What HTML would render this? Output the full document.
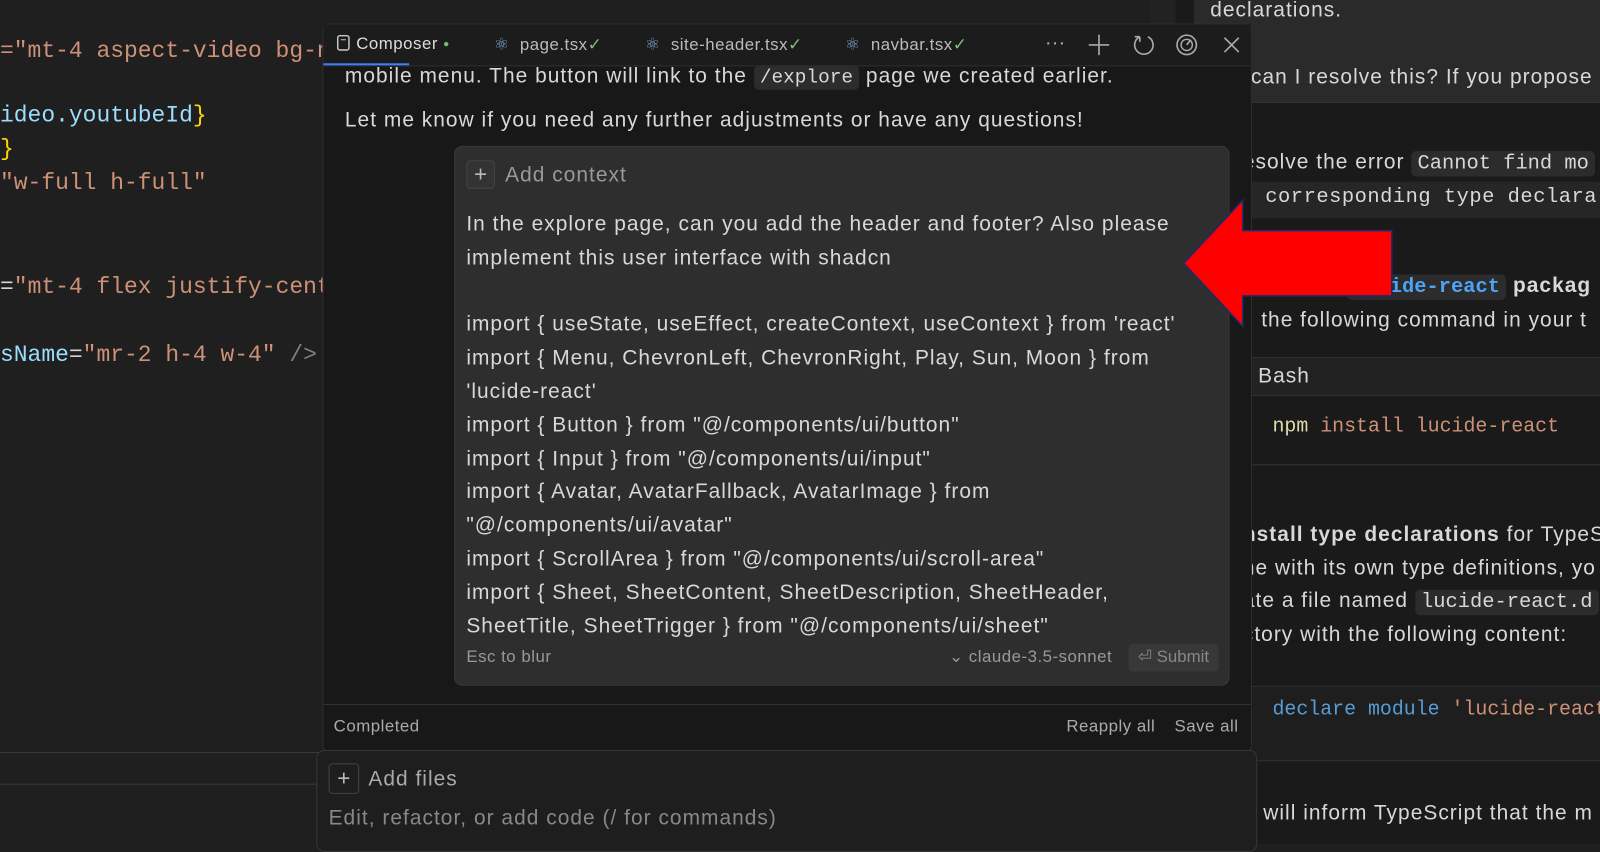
<!DOCTYPE html>
<html><head><meta charset="utf-8"><style>
*{margin:0;padding:0;box-sizing:border-box}
body{width:1600px;height:827px;overflow:hidden;background:#1f1f1f;font-family:"Liberation Sans",sans-serif;color:#ccc;position:relative}
#w{position:absolute;left:0;top:0;width:1600px;height:827px;transform:scale(1.0204);transform-origin:0 0}
.abs{position:absolute;white-space:nowrap}
.code{font-family:"Liberation Mono",monospace;font-size:22.5px;color:#ce9178;letter-spacing:0}
.b{color:#9cdcfe}.y{color:#ffd700}.g{color:#808080}
.ui{font-size:20.5px;color:#d8d8d8;letter-spacing:1px}
.sm{font-size:16.5px;letter-spacing:0.5px}
.chip{font-family:"Liberation Mono",monospace;background:#2c2c2c;border-radius:5px;padding:1px 6px;letter-spacing:0}
</style></head><body><div id="w">
<!-- left editor -->
<div class="abs code" style="left:0;top:37px">="mt-4 aspect-video bg-n</div>
<div class="abs code b" style="left:0;top:100px">ideo.youtubeId<span class="y">}</span></div>
<div class="abs code y" style="left:0;top:133px">}</div>
<div class="abs code" style="left:0;top:166px">"w-full h-full"</div>
<div class="abs code" style="left:0;top:268px"><span style="color:#d4d4d4">=</span>"mt-4 flex justify-cent</div>
<div class="abs code" style="left:0;top:335px"><span class="b">sName</span><span style="color:#d4d4d4">=</span>"mr-2 h-4 w-4" <span class="g">/&gt;</span></div>
<div class="abs" style="left:0;top:737px;width:316px;height:1px;background:#3a3a3a"></div>
<div class="abs" style="left:0;top:768px;width:316px;height:1px;background:#3a3a3a"></div>

<!-- right panel -->
<div class="abs" style="left:1128px;top:0;width:472px;height:827px;background:#1a1a1a"></div>
<div class="abs" style="left:1128px;top:0;width:24px;height:827px;background:#222"></div>
<div class="abs" style="left:1170px;top:0;width:430px;height:100px;background:#2a2a2a"></div>
<div class="abs ui" style="left:1186px;top:-2px">declarations.</div>
<div class="abs ui" style="left:1226px;top:64px">can I resolve this? If you propose</div>
<div class="abs" style="left:1170px;top:100px;width:430px;height:1px;background:#333"></div>
<div class="abs ui" style="left:1218px;top:147px">esolve the error <span class="chip" style="font-size:20px">Cannot find mo</span></div>
<div class="abs" style="left:1226px;top:178px;width:374px;height:36px;background:#262626"></div>
<div class="abs ui" style="left:1240px;top:182px;font-family:'Liberation Mono',monospace;font-size:20px;letter-spacing:0.5px">corresponding type declara</div>
<div class="abs ui" style="left:1320px;top:268px"><span class="chip" style="color:#4fa3f7;font-weight:bold;font-size:20px">lucide-react</span> <b>packag</b></div>
<div class="abs ui" style="left:1236px;top:302px">the following command in your t</div>
<div class="abs" style="left:1226px;top:350px;width:374px;height:1px;background:#333"></div>
<div class="abs" style="left:1226px;top:351px;width:374px;height:36px;background:#222"></div>
<div class="abs ui" style="left:1233px;top:357px">Bash</div>
<div class="abs" style="left:1226px;top:387px;width:374px;height:1px;background:#333"></div>
<div class="abs code" style="left:1247px;top:407px;font-size:19.5px"><span style="color:#dcdcaa">npm</span> install lucide-react</div>
<div class="abs" style="left:1226px;top:455px;width:374px;height:1px;background:#333"></div>
<div class="abs ui" style="left:1218px;top:512px"><b>nstall type declarations</b> for TypeSc</div>
<div class="abs ui" style="left:1218px;top:545px">ne with its own type definitions, yo</div>
<div class="abs ui" style="left:1218px;top:577px">ate a file named <span class="chip" style="font-size:20px">lucide-react.d</span></div>
<div class="abs ui" style="left:1218px;top:610px">ctory with the following content:</div>
<div class="abs" style="left:1226px;top:672px;width:374px;height:1px;background:#333"></div>
<div class="abs" style="left:1226px;top:673px;width:374px;height:72px;background:#1e1e1e"></div>
<div class="abs code" style="left:1247px;top:684px;font-size:19.5px"><span style="color:#569cd6">declare module</span> 'lucide-react</div>
<div class="abs" style="left:1226px;top:745px;width:374px;height:1px;background:#333"></div>
<div class="abs ui" style="left:1238px;top:785px">will inform TypeScript that the m</div>

<!-- composer -->
<div class="abs" style="left:316px;top:23px;width:911px;height:714px;background:#181818;border:1px solid #2e2e2e;border-radius:6px"></div>
<div class="abs" style="left:317px;top:24px;width:909px;height:41px;background:#1c1c1c;border-bottom:1px solid #2e2e2e"></div>
<div class="abs" style="left:317px;top:62px;width:84px;height:2px;background:#3b82f6"></div>
<div class="abs sm" style="left:330px;top:34px;color:#ddd">
<svg width="14" height="16" style="vertical-align:-2px"><rect x="1" y="1" width="11" height="14" rx="2" fill="none" stroke="#ccc" stroke-width="1.4"/><line x1="4" y1="5" x2="9" y2="5" stroke="#ccc"/></svg> Composer <span style="color:#6fbf73;font-size:10px;vertical-align:2px">●</span></div>
<div class="abs sm" style="left:484px;top:34px;color:#bbb"><span style="color:#7aa6d6">⚛</span>&nbsp; page.tsx<span style="color:#7fbf7f">✓</span></div>
<div class="abs sm" style="left:632px;top:34px;color:#bbb"><span style="color:#7aa6d6">⚛</span>&nbsp; site-header.tsx<span style="color:#7fbf7f">✓</span></div>
<div class="abs sm" style="left:828px;top:34px;color:#bbb"><span style="color:#7aa6d6">⚛</span>&nbsp; navbar.tsx<span style="color:#7fbf7f">✓</span></div>
<div class="abs" style="left:1024px;top:31px;font-size:20px;color:#aaa">···</div>
<svg class="abs" style="left:1066px;top:33px" width="22" height="22"><path d="M11 1V21M1 11H21" stroke="#aaa" stroke-width="1.6"/></svg>
<svg class="abs" style="left:1110px;top:33px" width="22" height="22"><path d="M7 3A9 9 0 1 0 15 3M7 3V8M7 3H2" fill="none" stroke="#aaa" stroke-width="1.6"/></svg>
<svg class="abs" style="left:1152px;top:33px" width="22" height="22"><circle cx="11" cy="11" r="9.5" fill="none" stroke="#aaa" stroke-width="1.6"/><circle cx="11" cy="11" r="5.5" fill="none" stroke="#aaa" stroke-width="1.4"/><path d="M11 11L15 6" stroke="#aaa" stroke-width="1.6"/></svg>
<svg class="abs" style="left:1198px;top:35px" width="18" height="18"><path d="M2 2L16 16M16 2L2 16" stroke="#aaa" stroke-width="1.6"/></svg>

<div class="abs ui" style="left:338px;top:63px">mobile menu. The button will link to the <span class="chip" style="font-size:19px">/explore</span> page we created earlier.</div>
<div class="abs ui" style="left:338px;top:106px">Let me know if you need any further adjustments or have any questions!</div>

<div class="abs" style="left:445px;top:143px;width:760px;height:529px;background:#2e2e2e;border:1px solid #383838;border-radius:8px"></div>
<div class="abs" style="left:457px;top:157px;width:28px;height:28px;border:1px solid #444;border-radius:4px;background:#333;color:#bbb;font-size:22px;text-align:center;line-height:25px">+</div>
<div class="abs ui" style="left:495px;top:160px;color:#999">Add context</div>
<div class="abs ui" style="left:457px;top:204px;line-height:32.8px">In the explore page, can you add the header and footer? Also please<br>implement this user interface with shadcn<br><br>import { useState, useEffect, createContext, useContext } from 'react'<br>import { Menu, ChevronLeft, ChevronRight, Play, Sun, Moon } from<br>'lucide-react'<br>import { Button } from "@/components/ui/button"<br>import { Input } from "@/components/ui/input"<br>import { Avatar, AvatarFallback, AvatarImage } from<br>"@/components/ui/avatar"<br>import { ScrollArea } from "@/components/ui/scroll-area"<br>import { Sheet, SheetContent, SheetDescription, SheetHeader,<br>SheetTitle, SheetTrigger } from "@/components/ui/sheet"</div>
<div class="abs sm" style="left:457px;top:635px;color:#999">Esc to blur</div>
<div class="abs sm" style="left:930px;top:634px;color:#999">⌄ claude-3.5-sonnet</div>
<div class="abs sm" style="left:1106px;top:631px;width:88px;height:27px;background:#383838;border-radius:4px;color:#888;text-align:center;line-height:27px;letter-spacing:0">⏎ Submit</div>

<div class="abs" style="left:317px;top:690px;width:909px;height:1px;background:#333"></div>
<div class="abs sm" style="left:327px;top:703px;color:#aaa">Completed</div>
<div class="abs sm" style="left:1045px;top:703px;color:#aaa">Reapply all</div>
<div class="abs sm" style="left:1151px;top:703px;color:#aaa">Save all</div>

<div class="abs" style="left:310px;top:735px;width:922px;height:100px;background:#1e1e1e;border:1px solid #363636;border-radius:8px"></div>
<div class="abs" style="left:322px;top:748px;width:30px;height:30px;border:1px solid #444;border-radius:4px;color:#bbb;font-size:22px;text-align:center;line-height:27px">+</div>
<div class="abs ui" style="left:361px;top:752px;color:#aaa">Add files</div>
<div class="abs ui" style="left:322px;top:790px;color:#888">Edit, refactor, or add code (/ for commands)</div>

<!-- arrow -->
<svg class="abs" style="left:0;top:0" width="1600" height="827"><polygon points="1160,258 1218,196 1218,226 1364,226 1364,290 1218,290 1218,320" fill="#ff0000" stroke="#1b2a6b" stroke-width="1.5"/></svg>
</div></body></html>
